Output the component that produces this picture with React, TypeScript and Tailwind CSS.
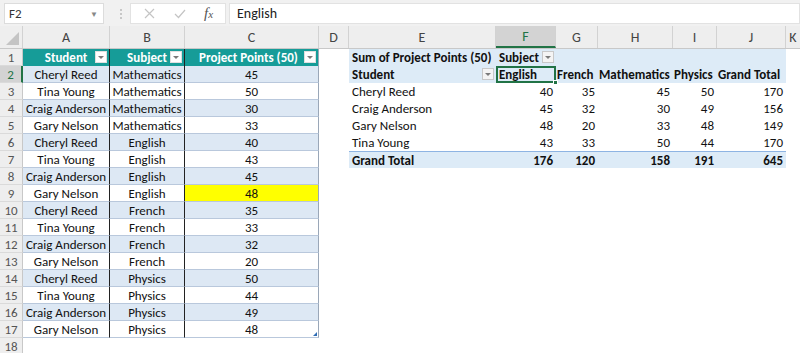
import React from "react";

const W = [23, 87, 75, 134, 30, 147, 60, 42, 75, 44, 69, 14];
const LETTERS = ["", "A", "B", "C", "D", "E", "F", "G", "H", "I", "J", "K"];
const ROW_H = "h-[17px]";

const data: [string, string, number][] = [
  ["Cheryl Reed", "Mathematics", 45],
  ["Tina Young", "Mathematics", 50],
  ["Craig Anderson", "Mathematics", 30],
  ["Gary Nelson", "Mathematics", 33],
  ["Cheryl Reed", "English", 40],
  ["Tina Young", "English", 43],
  ["Craig Anderson", "English", 45],
  ["Gary Nelson", "English", 48],
  ["Cheryl Reed", "French", 35],
  ["Tina Young", "French", 33],
  ["Craig Anderson", "French", 32],
  ["Gary Nelson", "French", 20],
  ["Cheryl Reed", "Physics", 50],
  ["Tina Young", "Physics", 44],
  ["Craig Anderson", "Physics", 49],
  ["Gary Nelson", "Physics", 48],
];

const pivot: [string, number[]][] = [
  ["Cheryl Reed", [40, 35, 45, 50, 170]],
  ["Craig Anderson", [45, 32, 30, 49, 156]],
  ["Gary Nelson", [48, 20, 33, 48, 149]],
  ["Tina Young", [43, 33, 50, 44, 170]],
];
const totals = [176, 120, 158, 191, 645];

function FilterBtn({ tone = "white" }: { tone?: "white" | "light" }) {
  return (
    <span
      className={`absolute right-[2px] top-[2px] z-10 flex h-[12px] w-[12px] items-center justify-center border ${
        tone === "white" ? "border-[#e0e0e0] bg-white" : "border-[#c8c8c8] bg-[#f4f4f4]"
      }`}
    >
      <span className="h-0 w-0 border-x-[3px] border-t-[3px] border-x-transparent border-t-[#7a7a7a]" />
    </span>
  );
}

function Cell({
  w,
  className = "",
  children,
}: {
  w: number;
  className?: string;
  children?: React.ReactNode;
}) {
  return (
    <div
      className={`relative flex shrink-0 items-center whitespace-nowrap ${className}`}
      style={{ width: w }}
    >
      {children}
    </div>
  );
}

function leftCell(r: number, c: number) {
  // r: sheet row (1..17), c: 1..3
  const w = W[c];
  const side =
    c === 3 ? "border-r border-r-[#9aa7b8]" : "border-r border-r-[#222]";
  if (r === 1) {
    const label = ["", "Student", "Subject", "Project Points (50)"][c];
    return (
      <Cell key={c} w={w} className={`justify-center bg-[#169c98] font-bold text-white ${side}`}>
        <span className={c === 3 ? "pr-[6px]" : ""}>{label}</span>
        <FilterBtn />
      </Cell>
    );
  }
  const row = data[r - 2];
  const band = r % 2 === 0 ? "bg-[#dde8f4]" : "bg-white";
  const fill = r === 9 && c === 3 ? "bg-[#ffff00]" : band;
  const text = c === 1 ? row[0] : c === 2 ? row[1] : String(row[2]);
  return (
    <Cell
      key={c}
      w={w}
      className={`justify-center border-b border-b-[#b9c8dc] ${fill} ${side}`}
    >
      {text}
      {r === 17 && c === 3 && (
        <span className="absolute bottom-[1px] right-[1px] h-0 w-0 border-b-[4px] border-l-[4px] border-b-[#2f6db5] border-l-transparent" />
      )}
    </Cell>
  );
}

function pivotCell(r: number, c: number) {
  // c: 5..10 (E..J)
  const w = W[c];
  const light = "bg-[#ddebf7]";
  if (r === 1) {
    if (c === 5)
      return (
        <Cell key={c} w={w} className={`${light} pl-[3px] font-bold`}>
          Sum of Project Points (50)
        </Cell>
      );
    if (c === 6)
      return (
        <Cell key={c} w={w} className={`${light} pl-[3px] font-bold`}>
          Subject
          <FilterBtn tone="light" />
        </Cell>
      );
    return <Cell key={c} w={w} className={light} />;
  }
  if (r === 2) {
    const labels = ["", "", "", "", "", "Student", "English", "French", "Mathematics", "Physics", "Grand Total"];
    if (c === 5)
      return (
        <Cell key={c} w={w} className={`${light} pl-[3px] font-bold`}>
          Student
          <FilterBtn tone="light" />
        </Cell>
      );
    if (c === 6)
      return (
        <Cell key={c} w={w} className={`${light} font-bold`}>
          <span className="absolute inset-0 border-2 border-[#217346]" />
          <span className="pl-[3px]">{labels[c]}</span>
          <span className="absolute -bottom-[2px] -right-[2px] z-10 h-[5px] w-[5px] border border-white bg-[#217346]" />
        </Cell>
      );
    return (
      <Cell key={c} w={w} className={`${light} pl-[1px] font-bold`}>
        {labels[c]}
      </Cell>
    );
  }
  if (r >= 3 && r <= 6) {
    const [name, vals] = pivot[r - 3];
    if (c === 5)
      return (
        <Cell key={c} w={w} className="pl-[3px]">
          {name}
        </Cell>
      );
    return (
      <Cell key={c} w={w} className="justify-end pr-[3px]">
        {vals[c - 6]}
      </Cell>
    );
  }
  if (r === 7) {
    const base = `${light} border-t border-t-[#8eb4e3] font-bold`;
    if (c === 5)
      return (
        <Cell key={c} w={w} className={`${base} pl-[3px]`}>
          Grand Total
        </Cell>
      );
    return (
      <Cell key={c} w={w} className={`${base} justify-end pr-[3px]`}>
        {totals[c - 6]}
      </Cell>
    );
  }
  return <Cell key={c} w={w} />;
}

function SheetRow({ r }: { r: number }) {
  const cells: React.ReactNode[] = [];
  for (let c = 1; c < W.length; c++) {
    if (c <= 3 && r <= 17) cells.push(leftCell(r, c));
    else if (c >= 5 && c <= 10) cells.push(pivotCell(r, c));
    else cells.push(<Cell key={c} w={W[c]} />);
  }
  const active = r === 2;
  return (
    <div className={`flex ${ROW_H}`}>
      <Cell
        w={W[0]}
        className={`justify-center border-r text-[13px] ${
          active
            ? "border-r-2 border-r-[#217346] bg-[#d3d3d3] text-[#217346]"
            : "border-r-[#c8c8c8] bg-[#eeeeee] text-[#555]"
        } border-b border-b-[#dadada]`}
      >
        {r}
      </Cell>
      {cells}
    </div>
  );
}

export default function App() {
  return (
    <div
      className="h-[353px] w-[800px] overflow-hidden bg-white text-[13px] leading-none text-[#111]"
      style={{ fontFamily: "Calibri, Carlito, Lato, sans-serif" }}
    >
      {/* formula bar */}
      <div className="flex h-[26px] items-center bg-[#f1f1f1] pt-[1px]">
        <div className="ml-[4px] flex h-[21px] w-[100px] items-center justify-between border border-[#dcdcdc] bg-white pl-[4px] pr-[5px] text-[13px] text-[#333]">
          <span>F2</span>
          <span className="text-[8px] text-[#888]">▼</span>
        </div>
        <div className="ml-[10px] flex w-[14px] flex-col items-center gap-[2px]">
          <span className="h-[2px] w-[2px] rounded-full bg-[#b8b8b8]" />
          <span className="h-[2px] w-[2px] rounded-full bg-[#b8b8b8]" />
          <span className="h-[2px] w-[2px] rounded-full bg-[#b8b8b8]" />
        </div>
        <div className="ml-[2px] flex h-[21px] w-[96px] items-center border border-[#e2e2e2] bg-white text-[#bdbdbd]">
          <svg className="ml-[13px]" width="11" height="11" viewBox="0 0 11 11">
            <path d="M1 1 L10 10 M10 1 L1 10" stroke="#c4c4c4" strokeWidth="1.2" fill="none" />
          </svg>
          <svg className="ml-[19px]" width="12" height="10" viewBox="0 0 12 10">
            <path d="M1 5 L4.5 8.5 L11 1" stroke="#c4c4c4" strokeWidth="1.2" fill="none" />
          </svg>
          <span
            className="ml-[18px] text-[15px] italic text-[#555]"
            style={{ fontFamily: "'Liberation Serif', serif" }}
          >
            f<span className="text-[11px]">x</span>
          </span>
        </div>
        <div className="ml-[3px] flex h-[21px] flex-1 items-center border border-[#e2e2e2] bg-white pl-[7px] text-[14px] text-[#222]">
          English
        </div>
      </div>
      {/* column headers */}
      <div className="flex h-[23px] border-b border-b-[#c8c8c8] bg-[#eeeeee] text-[14px] text-[#444]">
        {W.map((w, i) => (
          <Cell
            key={i}
            w={w}
            className={`justify-center pt-[2px] ${
              i === 6
                ? "border-b-2 border-b-[#217346] bg-[#d3d3d3] text-[#217346]"
                : ""
            } ${i < W.length - 1 ? "border-r border-r-[#d2d2d2]" : ""}`}
          >
            {i === 0 ? (
              <span className="absolute bottom-[3px] right-[3px] h-0 w-0 border-b-[13px] border-l-[13px] border-b-[#c4c4c4] border-l-transparent" />
            ) : (
              LETTERS[i]
            )}
          </Cell>
        ))}
      </div>
      {Array.from({ length: 18 }, (_, i) => (
        <SheetRow key={i} r={i + 1} />
      ))}
    </div>
  );
}
